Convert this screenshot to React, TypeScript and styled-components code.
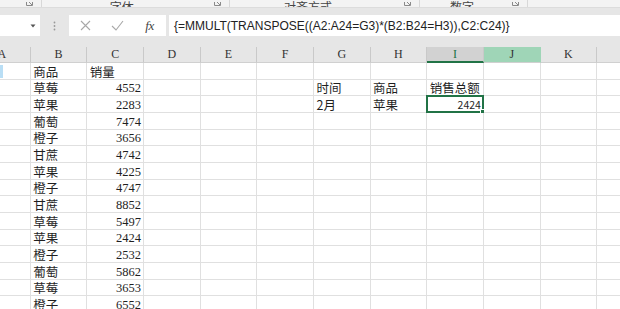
import React from "react";
import styled, { createGlobalStyle } from "styled-components";

const COL_W = 56.667;
const ROW_H = 16.667;
const COLS = ["A", "B", "C", "D", "E", "F", "G", "H", "I", "J", "K", "L"];

type Kind = "text" | "num" | "amount";
type CellData = { text: string; kind: Kind };

const t = (text: string): CellData => ({ text, kind: "text" });
const n = (text: string): CellData => ({ text, kind: "num" });

const fruits: [string, string][] = [
  ["草莓", "4552"],
  ["苹果", "2283"],
  ["葡萄", "7474"],
  ["橙子", "3656"],
  ["甘蔗", "4742"],
  ["苹果", "4225"],
  ["橙子", "4747"],
  ["甘蔗", "8852"],
  ["草莓", "5497"],
  ["苹果", "2424"],
  ["橙子", "2532"],
  ["葡萄", "5862"],
  ["草莓", "3653"],
  ["橙子", "6552"],
];

const sheet: Record<string, CellData>[] = [
  { B: t("商品"), C: t("销量") },
  ...fruits.map(([name, qty]) => ({ B: t(name), C: n(qty) })),
];
sheet[1] = { ...sheet[1], G: t("时间"), H: t("商品"), I: t("销售总额") };
sheet[2] = { ...sheet[2], G: t("2月"), H: t("苹果"), I: { text: "2424", kind: "amount" } };

const ribbonGroups = [
  { label: "剪贴板", width: 101.5, lead: -60, pad: 24 },
  { label: "字体", width: 188.5, lead: 0, pad: 12 },
  { label: "对齐方式", width: 190, lead: 0, pad: 18 },
  { label: "数字", width: 108, lead: 0, pad: 8 },
  { label: "", width: 120, lead: 0, pad: 0 },
];

const GlobalStyle = createGlobalStyle`
  html, body {
    margin: 0;
    padding: 0;
    width: 620px;
    height: 309px;
    overflow: hidden;
    background: #ffffff;
  }
  * { box-sizing: border-box; }
`;

const Page = styled.div`
  width: 620px;
  height: 309px;
  overflow: hidden;
  font-family: "Liberation Sans", "Noto Sans CJK SC", sans-serif;
`;

const Ribbon = styled.div`
  height: 8px;
  display: flex;
  background: #f3f3f3;
  border-bottom: 1px solid #dcdcdc;
  overflow: hidden;
`;

const Group = styled.div<{ $width: number; $lead: number }>`
  flex: 0 0 ${(p) => p.$width}px;
  margin-left: ${(p) => p.$lead}px;
  display: flex;
  align-items: flex-end;
  border-right: 1px solid #d8d8d8;
  height: 7px;
  overflow: hidden;
`;

const GroupLabel = styled.div<{ $pad: number }>`
  flex: 1;
  text-align: center;
  padding-right: ${(p) => p.$pad}px;
  font-family: "Noto Sans CJK SC", sans-serif;
  font-size: 12px;
  line-height: 12px;
  color: #444;
  margin-bottom: -6px;
`;

const Launcher = styled.svg`
  flex: 0 0 7px;
  margin-right: 8px;
  margin-bottom: 1px;
`;

const FormulaBar = styled.div`
  height: 39px;
  background: #e6e6e6;
  display: flex;
  align-items: flex-start;
  padding-top: 7px;
`;

const NameBox = styled.div`
  width: 40px;
  height: 21px;
  background: #fff;
  display: flex;
  align-items: center;
  justify-content: flex-end;
  padding-right: 4px;
`;

const Dots = styled.div`
  width: 29px;
  height: 21px;
  display: flex;
  align-items: center;
  justify-content: center;
`;

const ActionBox = styled.div`
  width: 97px;
  height: 21px;
  background: #fff;
  display: grid;
  grid-template-columns: 32px 32px 33px;
  align-items: center;
  justify-items: center;
`;

const Fx = styled.span`
  font-family: "Liberation Serif", serif;
  font-style: italic;
  font-size: 13px;
  color: #444;
  letter-spacing: -0.5px;
`;

const FormulaInput = styled.div`
  flex: 1;
  margin-left: 3px;
  height: 21px;
  background: #fff;
  padding-left: 5px;
  display: flex;
  align-items: center;
  font-family: "Liberation Sans", sans-serif;
  font-size: 12px;
  color: #222;
  white-space: nowrap;
  overflow: hidden;
`;

const Sheet = styled.div`
  margin-left: -26px;
  display: grid;
  grid-template-columns: repeat(${COLS.length}, ${COL_W}px);
  grid-template-rows: 16px repeat(${sheet.length}, ${ROW_H}px);
`;

const ColHeader = styled.div<{ $state: "normal" | "active" | "hover" }>`
  display: flex;
  align-items: center;
  justify-content: center;
  font-family: "Liberation Serif", serif;
  font-size: 12px;
  background: ${(p) =>
    p.$state === "active" ? "#d2d2d2" : p.$state === "hover" ? "#9fd5b7" : "#e6e6e6"};
  color: ${(p) => (p.$state === "active" ? "#217346" : "#333")};
  border-right: 1px solid ${(p) => (p.$state === "hover" ? "#9fd5b7" : "#c9c9c9")};
  border-bottom: ${(p) => (p.$state === "active" ? "2px solid #217346" : "1px solid #d0d0d0")};
`;

const Cell = styled.div<{ $kind: Kind }>`
  position: relative;
  display: flex;
  align-items: center;
  justify-content: ${(p) => (p.$kind === "text" ? "flex-start" : "flex-end")};
  padding: 2px ${(p) => (p.$kind === "text" ? "0" : "2px")} 0
    ${(p) => (p.$kind === "text" ? "2.5px" : "0")};
  border-right: 1px solid #e0e0e0;
  border-bottom: 1px solid #e0e0e0;
  font-family: ${(p) =>
    p.$kind === "num" ? `"Liberation Serif", serif` : `"Noto Sans CJK SC", sans-serif`};
  font-size: ${(p) => (p.$kind === "amount" ? "10.5px" : "12.5px")};
  line-height: 14px;
  color: #1f1f1f;
  white-space: nowrap;
`;

const Selection = styled.div`
  position: absolute;
  left: -1px;
  top: -1px;
  right: -1px;
  bottom: -1px;
  border: 2px solid #217346;
  pointer-events: none;
`;

const FillHandle = styled.div`
  position: absolute;
  right: -3px;
  bottom: -3px;
  width: 5px;
  height: 5px;
  background: #217346;
  border: 1px solid #fff;
`;

const Marker = styled.div`
  position: absolute;
  left: 26px;
  top: 2px;
  bottom: 1px;
  width: 3px;
  background: #b9def5;
`;

const App: React.FC = () => {
  return (
    <Page>
      <GlobalStyle />
      <Ribbon>
        {ribbonGroups.map((g, i) => (
          <Group key={i} $width={g.width} $lead={g.lead}>
            <GroupLabel $pad={g.pad}>{g.label}</GroupLabel>
            {g.label && (
              <Launcher width="7" height="4" viewBox="0 3 7 4">
                <path d="M0.5 3v3.5h6V3M3 3l3 3" stroke="#8a8a8a" fill="none" strokeWidth="1" />
              </Launcher>
            )}
          </Group>
        ))}
      </Ribbon>

      <FormulaBar>
        <NameBox>
          <svg width="6" height="4" viewBox="0 0 6 4">
            <path d="M0.5 0.5h5L3 3.5z" fill="#555" />
          </svg>
        </NameBox>
        <Dots>
          <svg width="3" height="10" viewBox="0 0 3 10">
            <circle cx="1.5" cy="1.5" r="0.9" fill="#999" />
            <circle cx="1.5" cy="5" r="0.9" fill="#999" />
            <circle cx="1.5" cy="8.5" r="0.9" fill="#999" />
          </svg>
        </Dots>
        <ActionBox>
          <svg width="11" height="11" viewBox="0 0 11 11">
            <path d="M1 1l9 9M10 1l-9 9" stroke="#a8a8a8" strokeWidth="1.1" />
          </svg>
          <svg width="13" height="11" viewBox="0 0 13 11">
            <path d="M1 6l4 4 7-9" stroke="#a8a8a8" strokeWidth="1.1" fill="none" />
          </svg>
          <Fx>fx</Fx>
        </ActionBox>
        <FormulaInput>{"{=MMULT(TRANSPOSE((A2:A24=G3)*(B2:B24=H3)),C2:C24)}"}</FormulaInput>
      </FormulaBar>

      <Sheet>
        {COLS.map((c) => (
          <ColHeader key={c} $state={c === "I" ? "active" : c === "J" ? "hover" : "normal"}>
            {c}
          </ColHeader>
        ))}
        {sheet.map((row, r) =>
          COLS.map((c) => {
            const cell = row[c];
            const selected = r === 2 && c === "I";
            return (
              <Cell key={`${c}${r}`} $kind={cell ? cell.kind : "text"}>
                {cell?.text}
                {r === 0 && c === "A" && <Marker />}
                {selected && (
                  <Selection>
                    <FillHandle />
                  </Selection>
                )}
              </Cell>
            );
          })
        )}
      </Sheet>
    </Page>
  );
};

export default App;
